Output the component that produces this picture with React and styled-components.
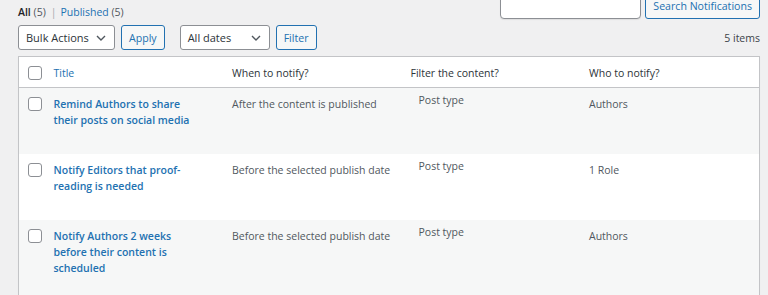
import React from 'react';
import styled, { createGlobalStyle } from 'styled-components';

const notifications = [
  {
    title: 'Remind Authors to share their posts on social media',
    when: 'After the content is published',
    filter: 'Post type',
    who: 'Authors',
  },
  {
    title: 'Notify Editors that proof-reading is needed',
    when: 'Before the selected publish date',
    filter: 'Post type',
    who: '1 Role',
  },
  {
    title: 'Notify Authors 2 weeks before their content is scheduled',
    when: 'Before the selected publish date',
    filter: 'Post type',
    who: 'Authors',
  },
];

function Chevron() {
  return (
    <svg width='10' height='6' viewBox='0 0 10 6'>
      <path d='M1 1l4 4 4-4' fill='none' stroke='#50575e' strokeWidth='1.4' />
    </svg>
  );
}

function App() {
  return (
    <>
      <GlobalStyle />
      <Page>
        <TopBar>
          <Views>
            <Current>All</Current> <Count>(5)</Count>
            <Sep>|</Sep>
            <ViewLink>Published</ViewLink> <Count>(5)</Count>
          </Views>
          <SearchBox>
            <SearchInput />
            <Button>Search Notifications</Button>
          </SearchBox>
        </TopBar>

        <Toolbar>
          <Select width={97}>
            Bulk Actions
            <Chevron />
          </Select>
          <Button>Apply</Button>
          <Select width={90} $gap>
            All dates
            <Chevron />
          </Select>
          <Button>Filter</Button>
          <Items>5 items</Items>
        </Toolbar>

        <Table>
          <colgroup>
            <col style={{ width: 27 }} />
            <col />
            <col />
            <col />
            <col />
          </colgroup>
          <thead>
            <tr>
              <HeadCell $check>
                <Checkbox />
              </HeadCell>
              <HeadCell $link>Title</HeadCell>
              <HeadCell>When to notify?</HeadCell>
              <HeadCell>Filter the content?</HeadCell>
              <HeadCell>Who to notify?</HeadCell>
            </tr>
          </thead>
          <tbody>
            {notifications.map((n) => (
              <Row key={n.title}>
                <Cell $check>
                  <Checkbox />
                </Cell>
                <Cell>
                  <TitleLink>{n.title}</TitleLink>
                  <RowActions>Edit | Trash</RowActions>
                </Cell>
                <Cell>{n.when}</Cell>
                <Cell>
                  <FilterTag>{n.filter}</FilterTag>
                </Cell>
                <Cell>{n.who}</Cell>
              </Row>
            ))}
          </tbody>
        </Table>
      </Page>
    </>
  );
}

export default App;

//-----Styled Components-----
const GlobalStyle = createGlobalStyle`
  body {
    margin: 0;
    background: #f0f0f1;
    font-family: "Open Sans", "Noto Sans", sans-serif;
    font-size: 10.5px;
    color: #50575e;
    overflow: hidden;
  }
`;

const Page = styled.div`
  margin-top: -10px;
  padding: 0 8px 0 18px;
`;

const TopBar = styled.div`
  display: flex;
  justify-content: space-between;
  height: 32px;
`;

const Views = styled.div`
  align-self: flex-end;
  line-height: 20px;
`;

const Current = styled.span`
  color: #1d2327;
  font-weight: 600;
`;

const Count = styled.span`
  color: #50575e;
`;

const Sep = styled.span`
  color: #a7aaad;
  margin: 0 4px 0 5px;
`;

const ViewLink = styled.span`
  color: #2271b1;
`;

const SearchBox = styled.div`
  display: flex;
  gap: 4px;
  height: 26px;
  margin-top: 3px;
`;

const SearchInput = styled.div`
  width: 139px;
  background: #fff;
  border: 1px solid #8c8f94;
  border-radius: 4px;
  box-shadow: 0 1px 1px rgba(0, 0, 0, 0.08);
`;

const Button = styled.div`
  display: flex;
  align-items: center;
  padding: 0 7px;
  border: 1px solid #2271b1;
  border-radius: 3px;
  background: #f6f7f7;
  color: #2271b1;
  font-size: 10.6px;
  box-sizing: border-box;
`;

const Toolbar = styled.div`
  display: flex;
  align-items: center;
  height: 25px;
  margin-top: 3px;
  ${Button} {
    height: 25px;
  }
`;

const Select = styled.div`
  display: flex;
  align-items: center;
  justify-content: space-between;
  box-sizing: border-box;
  width: ${(p) => p.width}px;
  height: 25px;
  padding: 0 8px 0 7px;
  margin: 0 6px 0 ${(p) => (p.$gap ? '15px' : '0')};
  background: #fff;
  border: 1px solid #8c8f94;
  border-radius: 3px;
  color: #2c3338;
  font-size: 11px;
`;

const Items = styled.div`
  margin-left: auto;
  color: #3c434a;
`;

const Table = styled.table`
  width: 100%;
  margin-top: 6px;
  border-collapse: collapse;
  table-layout: fixed;
  background: #fff;
  border: 1px solid #c3c4c7;
  box-shadow: 0 1px 1px rgba(0, 0, 0, 0.04);
`;

const HeadCell = styled.th`
  height: 29px;
  padding: ${(p) => (p.$check ? '1px 0 0 9px' : '1px 8px 0')};
  text-align: left;
  font-weight: 400;
  color: ${(p) => (p.$link ? '#2271b1' : '#2c3338')};
  border-bottom: 1px solid #c3c4c7;
  vertical-align: middle;
`;

const Row = styled.tr`
  &:nth-child(odd) {
    background: #f6f7f7;
  }
`;

const Cell = styled.td`
  padding: ${(p) => (p.$check ? '9px 0 8px 9px' : '8px 8px 8px')};
  vertical-align: top;
  line-height: 16px;
  color: #50575e;
`;

const Checkbox = styled.span`
  display: block;
  width: 12px;
  height: 12px;
  background: #fff;
  border: 1px solid #8c8f94;
  border-radius: 3px;
`;

const TitleLink = styled.div`
  max-width: 150px;
  color: #2271b1;
  font-weight: 600;
`;

const RowActions = styled.div`
  margin-top: 2px;
  visibility: hidden;
`;

const FilterTag = styled.div`
  margin: -4px 0 0 8px;
`;
